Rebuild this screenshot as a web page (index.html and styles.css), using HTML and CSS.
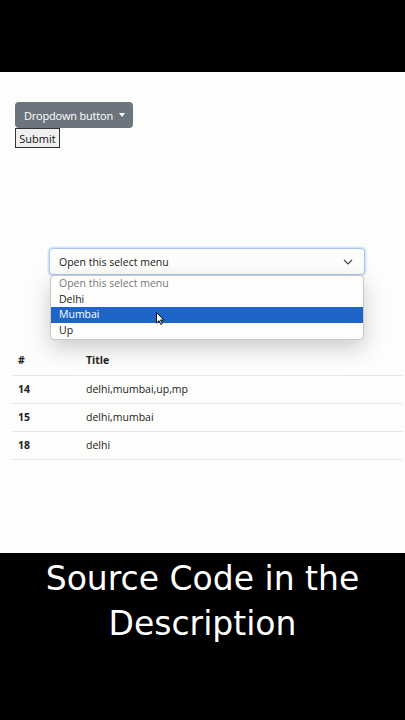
FILE: index.html
```html
<!DOCTYPE html>
<html>
<head>
<meta charset="utf-8">
<link rel="stylesheet" href="styles.css">
</head>
<body>
<div class="top-band"></div>
<main class="page">
  <div class="controls">
    <button class="dd-btn">Dropdown button <span class="caret"></span></button>
    <button class="submit">Submit</button>
  </div>
  <div class="select-wrap">
    <div class="select">
      <span>Open this select menu</span>
      <svg class="chev" width="10" height="6" viewBox="0 0 10 6"><path d="M1 1l4 4 4-4" fill="none" stroke="#444" stroke-width="1.2"/></svg>
    </div>
    <ul class="options">
      <li class="muted">Open this select menu</li>
      <li>Delhi</li>
      <li class="active">Mumbai<svg class="cursor" width="9" height="13" viewBox="0 0 9 13"><path d="M0.5 0.5v10.5l2.5-2.4 1.8 3.9 1.5-0.7-1.8-3.8h3.4z" fill="#fff" stroke="#000" stroke-width="0.9"/></svg></li>
      <li>Up</li>
    </ul>
  </div>
  <table class="tbl">
    <thead><tr><th class="c1">#</th><th>Title</th></tr></thead>
    <tbody>
      <tr><td class="c1">14</td><td>delhi,mumbai,up,mp</td></tr>
      <tr><td class="c1">15</td><td>delhi,mumbai</td></tr>
      <tr><td class="c1">18</td><td>delhi</td></tr>
    </tbody>
  </table>
</main>
<div class="caption">Source Code in the<br>Description</div>
</body>
</html>
```
FILE: styles.css
```css
* { box-sizing: border-box; }
html, body { margin: 0; padding: 0; }
body {
  width: 405px;
  height: 720px;
  background: #000;
  font-family: "Open Sans", "Noto Sans", sans-serif;
  display: flex;
  flex-direction: column;
  overflow: hidden;
}
.top-band { height: 72px; background: #000; flex: none; }
.page {
  height: 481px;
  flex: none;
  background: #fdfdfb;
  padding: 30px 2px 0 12px;
  position: relative;
}
.controls {
  display: flex;
  flex-direction: column;
  align-items: flex-start;
  padding-left: 3px;
}
.dd-btn {
  height: 26px;
  width: 118px;
  background: #6c757d;
  color: #fff;
  border: none;
  border-radius: 4px;
  font-family: inherit;
  font-size: 11px;
  letter-spacing: -0.2px;
  padding: 0 0 0 9px;
  display: flex;
  align-items: center;
  gap: 6px;
  text-align: left;
}
.caret {
  width: 0; height: 0;
  border-left: 3.5px solid transparent;
  border-right: 3.5px solid transparent;
  border-top: 4px solid #fff;
  margin-top: -1px;
}
.submit {
  height: 20px;
  width: 45px;
  background: #efefef;
  border: 1px solid #333;
  border-radius: 0;
  font-family: inherit;
  font-size: 11px;
  color: #111;
  padding: 0;
}
.select-wrap {
  margin: 100px 0 0 37px;
  width: 316px;
  position: relative;
}
.select {
  height: 27px;
  border: 1px solid #a8c6f4;
  border-radius: 4px;
  box-shadow: 0 0 0 1.5px #d6e4fb;
  background: #fdfdfb;
  display: flex;
  align-items: center;
  justify-content: space-between;
  padding: 0 11px 0 9px;
  font-size: 10.5px;
  color: #222;
}
.chev { margin-top: 1px; }
.options {
  position: absolute;
  left: 1px;
  right: 1px;
  top: 27px;
  list-style: none;
  margin: 0;
  padding: 0 0 1px;
  background: #fdfdfb;
  border: 1px solid #c8c8c8;
  border-radius: 4px;
  box-shadow: 0 8px 22px rgba(0,0,0,0.2);
  font-size: 10.5px;
  color: #222;
  z-index: 2;
}
.options li {
  height: 15.5px;
  line-height: 15.5px;
  padding-left: 8px;
  position: relative;
}
.options li.muted { color: #777; }
.options li.active { background: #1f65c9; color: #fff; }
.cursor { position: absolute; left: 105px; top: 5px; }
.tbl {
  margin-top: 71px;
  width: 391px;
  border-collapse: collapse;
  font-size: 10.5px;
  color: #222;
}
.tbl th, .tbl td {
  height: 28px;
  text-align: left;
  padding: 0 0 0 6px;
  border-bottom: 1px solid #e6e6e4;
}
.tbl th { font-weight: 700; height: 29px; }
.tbl .c1 { width: 68px; font-weight: 700; }
.caption {
  flex: 1;
  background: #000;
  color: #fff;
  text-align: center;
  font-family: "DejaVu Sans", Verdana, sans-serif;
  font-size: 33px;
  line-height: 45px;
  padding-top: 3px;
}
```
